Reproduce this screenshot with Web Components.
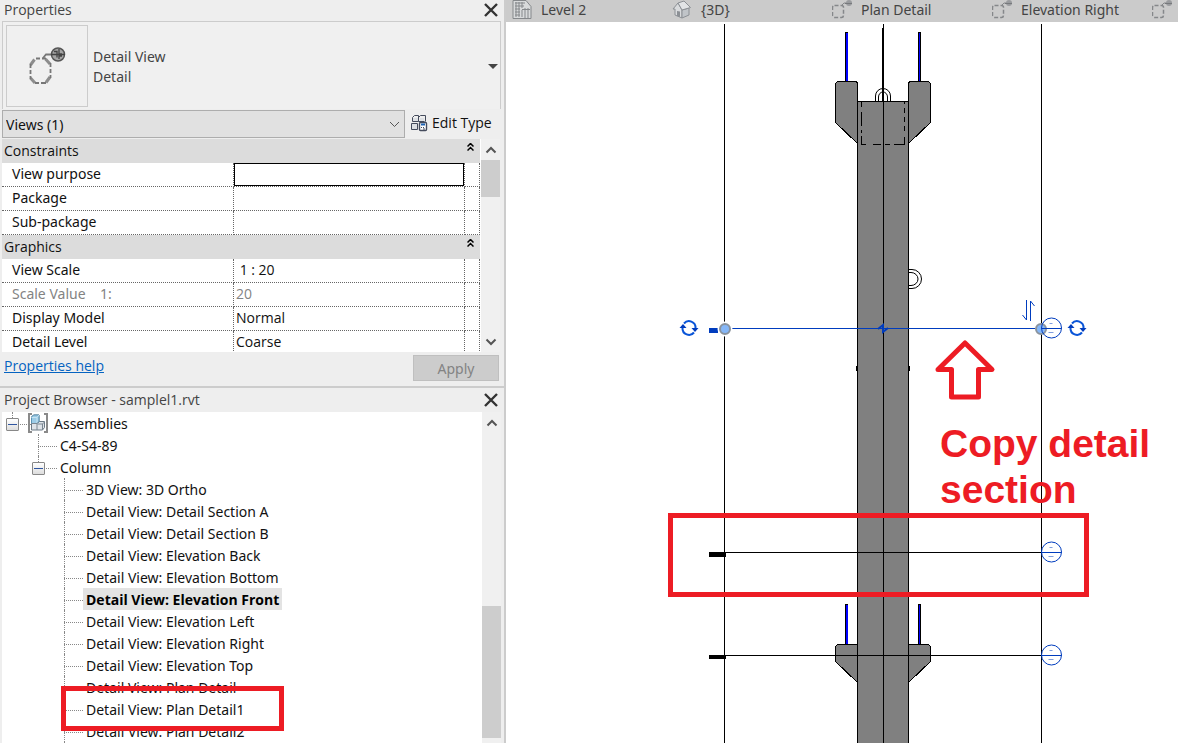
<!DOCTYPE html>
<html lang="en">
<head>
<meta charset="utf-8">
<title>Revit</title>
<style>
  body { margin: 0; font: 14px/20px "Open Sans", sans-serif; color: #111; }
</style>
</head>
<body>
<revit-app></revit-app>

<template id="t-app">
  <style>
    :host { display: grid; grid-template-columns: auto minmax(0, 1fr); height: 100vh; overflow: hidden; }
    .dock { display: grid; grid-template-rows: auto minmax(0, 1fr); width: 504px; background: #eee; border-right: 2px solid #ccc; min-height: 0; }
    .view { display: grid; grid-template-rows: 22px minmax(0, 1fr); min-width: 0; min-height: 0; }
  </style>
  <div class="dock">
    <properties-panel></properties-panel>
    <project-browser></project-browser>
  </div>
  <main class="view">
    <view-tabs>
      <view-tab icon="plan">Level 2</view-tab>
      <view-tab icon="house">{3D}</view-tab>
      <view-tab icon="detail">Plan Detail</view-tab>
      <view-tab icon="detail">Elevation Right</view-tab>
      <view-tab icon="detail"></view-tab>
    </view-tabs>
    <drawing-canvas></drawing-canvas>
  </main>
</template>

<template id="t-header">
  <style>
    :host { display: flex; justify-content: space-between; align-items: center; padding: 0 6px 0 4px; color: #444; }
    h2 { margin: 0; font: inherit; white-space: nowrap; }
    button { display: flex; padding: 0; border: 0; background: none; }
  </style>
  <h2><slot></slot></h2>
  <button aria-label="Close"><svg width="14" height="14" viewBox="0 0 14 14"><path d="M1 1l12 12M13 1L1 13" stroke="#333" stroke-width="2.400"/></svg></button>
</template>

<template id="t-scroll">
  <style>
    :host { display: flex; flex-direction: column; width: 19px; background: #f0f0f0; }
    button { display: flex; flex: none; align-items: center; justify-content: center; height: 21px; padding: 0; border: 0; background: none; }
    .before { flex: var(--before, 0) 0 0; }
    .thumb { flex: var(--thumb, 1) 0 0; background: #cdcdcd; }
    .after { flex: var(--after, 1) 0 0; }
    :host([no-end]) .end { display: none; }
  </style>
  <button aria-label="Scroll up"><svg width="12" height="8" viewBox="0 0 12 8"><path d="M1.500 6.500L6 2l4.500 4.500" fill="none" stroke="#555" stroke-width="2"/></svg></button>
  <div class="before"></div><div class="thumb"></div><div class="after"></div>
  <button class="end" aria-label="Scroll down"><svg width="12" height="8" viewBox="0 0 12 8"><path d="M1.500 1.500L6 6l4.500-4.500" fill="none" stroke="#555" stroke-width="2"/></svg></button>
</template>

<template id="t-properties">
  <style>
    :host { display: block; border-bottom: 2px solid #ccc; }
    panel-header { height: 19px; padding-bottom: 2px; }
    .type { display: flex; align-items: center; gap: 5px; margin: 0 3px 0 2px; height: 88px; padding: 0 2px 0 3px; box-sizing: border-box; border: 1px solid #ccc; border-bottom: 0; background: #f0f0f0; color: #444; }
    .thumb { display: flex; align-items: center; justify-content: center; box-sizing: border-box; width: 82px; height: 82px; border: 1px solid #ccc; }
    .name { flex: 1; padding-top: 2px; font-family: "Noto Sans", sans-serif; }
    button { font: inherit; }
    .drop { display: flex; padding: 2px 0 0; border: 0; background: none; }
    .filter { display: flex; gap: 6px; margin: 1px 0 1px 2px; height: 28px; }
    .pick { position: relative; width: 403px; }
    select { appearance: none; width: 100%; height: 28px; padding: 2px 3px 0; border: 1px solid #adadad; border-radius: 0; background: #e1e1e1; font: inherit; font-family: "Noto Sans", sans-serif; color: #111; }
    .pick svg { position: absolute; right: 5px; top: 11px; pointer-events: none; }
    .edit { display: flex; align-items: center; gap: 4px; padding: 0 0 2px; border: 0; background: none; color: #111; white-space: nowrap; }
    .grid { display: flex; gap: 1px; margin: 0 4px 0 2px; height: 213px; overflow: hidden; background: #fff; }
    property-grid { flex: 1; }
    scroll-bar { --thumb: 37; --after: 134; }
    .foot { display: flex; justify-content: space-between; align-items: flex-start; padding: 3px 5px 5px 4px; }
    a { color: #0563c1; line-height: 22px; }
    .apply { box-sizing: border-box; width: 86px; height: 26px; padding: 2px 0 0; border: 1px solid #bfbfbf; background: #ccc; color: #838383; font-family: "Noto Sans", sans-serif; }
  </style>
  <panel-header>Properties</panel-header>
  <div class="type">
    <div class="thumb"><svg width="40" height="42" viewBox="0 0 40 42" fill="none">
      <path d="M3.500 20l4-5.500M18.500 14l4.500 5M23 32l-4 5.500M8 38l-4.500-5" stroke="#8d8d8d" stroke-width="3"/>
      <path d="M9 13.500h4M15 13.500h4M8 38h4M14 38h5M3.500 19v4M3.500 25v4M3.500 31v3M23.500 18v4M23.500 24v4M23.500 30v3M16 13l3-3.500h5" stroke="#777" stroke-width="1.800"/>
      <circle cx="31" cy="9.500" r="6.500" fill="#a5a5a5" stroke="#555" stroke-width="1.500"/><path d="M24 9.500h14M27 6.500h3v6M32 4v5h3M32 14v-3h3" stroke="#444" stroke-width="1.300"/>
    </svg></div>
    <div class="name">Detail View<br>Detail</div>
    <button class="drop" aria-label="Change type"><svg width="10" height="5" viewBox="0 0 10 5"><path d="M0 0h10L5 5z" fill="#444"/></svg></button>
  </div>
  <div class="filter">
    <div class="pick"><select aria-label="Element filter"><option>Views (1)</option></select>
      <svg width="11" height="7" viewBox="0 0 11 7"><path d="M1 1l4.500 4.500L10 1" fill="none" stroke="#555"/></svg></div>
    <button class="edit"><svg width="17" height="17" viewBox="0 0 17 17" fill="none" stroke="#444b5c">
      <path d="M1.500 2.500l2-2h4v6h-6zM7.500 2.500l2-2h5v6M.5 8.500h6v6h-6zM7.500 6.500h6"/><path d="M2 3h5v3H2zM9 3h4v3H9zM1 9h5v5H1z" fill="#dde0e4" stroke="none"/>
      <rect x="8.500" y="7.500" width="7" height="8" rx="1" fill="#fff" stroke-width="1.400"/><path d="M10 9.500h4" stroke="#1c62b5" stroke-width="2"/><path d="M10 12.500h1M12 12.500h1M12 14h2"/>
    </svg>Edit Type</button>
  </div>
  <div class="grid"><property-grid></property-grid><scroll-bar></scroll-bar></div>
  <div class="foot"><a href="#help">Properties help</a><button class="apply">Apply</button></div>
</template>

<template id="t-grid">
  <style>
    :host { display: block; }
    table { width: 100%; table-layout: fixed; border-collapse: separate; border-spacing: 0; }
    .c1 { width: 232px; } .c3 { width: 15px; }
    th, td { box-sizing: border-box; height: 24px; padding: 0 2px 2px; border-bottom: 1px dotted #666; border-right: 1px dotted #666; text-align: left; font-weight: 400; line-height: 20px; white-space: pre; }
    tbody th { padding-left: 10px; font-family: "Noto Sans", sans-serif; }
    .group th { background: #dcdcdc; border: 0; padding: 0 6px 0 2px; font-family: inherit; }
    .group div { display: flex; justify-content: space-between; }
    .off { color: #838383; }
    input { display: block; box-sizing: border-box; width: 100%; height: 23px; padding: 0 2px; border: 1px solid #000; background: #fff; font: inherit; }
    tbody .field { padding: 0; }
    button { padding: 0; border: 0; background: none; height: 12px; display: flex; align-items: center; }
  </style>
  <table>
    <colgroup><col class="c1"><col><col class="c3"></colgroup>
    <tbody></tbody>
  </table>
</template>

<template id="t-browser">
  <style>
    :host { display: grid; grid-template-rows: 24px minmax(0, 1fr); min-height: 0; }
    .body { display: flex; margin: 0 3px 0 2px; min-height: 0; background: #fff; }
    .tree { flex: 1; padding-left: 10px; overflow: hidden; }
    scroll-bar { --before: 173; --thumb: 132; --after: 5; }
  </style>
  <panel-header>Project Browser - samplel1.rvt</panel-header>
  <div class="body">
    <div class="tree" role="tree">
      <tree-node label="Assemblies" last open icon>
        <tree-node label="C4-S4-89"></tree-node>
        <tree-node label="Column" last open>
          <tree-node label="3D View: 3D Ortho"></tree-node>
          <tree-node label="Detail View: Detail Section A"></tree-node>
          <tree-node label="Detail View: Detail Section B"></tree-node>
          <tree-node label="Detail View: Elevation Back"></tree-node>
          <tree-node label="Detail View: Elevation Bottom"></tree-node>
          <tree-node label="Detail View: Elevation Front" current></tree-node>
          <tree-node label="Detail View: Elevation Left"></tree-node>
          <tree-node label="Detail View: Elevation Right"></tree-node>
          <tree-node label="Detail View: Elevation Top"></tree-node>
          <tree-node label="Detail View: Plan Detail"></tree-node>
          <tree-node label="Detail View: Plan Detail1" marked></tree-node>
          <tree-node label="Detail View: Plan Detail2"></tree-node>
          <tree-node></tree-node>
        </tree-node>
      </tree-node>
    </div>
    <scroll-bar no-end></scroll-bar>
  </div>
</template>

<template id="t-node">
  <style>
    :host { display: block; position: relative; }
    :host::before { content: ""; position: absolute; left: 0; top: 0; bottom: 0; border-left: 1px dotted #888; }
    :host([last])::before { bottom: auto; height: 12px; }
    .row { display: flex; align-items: center; height: 22px; }
    .guide { width: 19px; margin-top: 2px; border-top: 1px dotted #888; }
    .label { box-sizing: border-box; height: 22px; padding: 1px 3px 0; font-family: "Noto Sans", sans-serif; line-height: 22px; white-space: nowrap; }
    .kids { padding-left: 26px; }
    button { position: relative; flex: none; width: 13px; height: 13px; margin: 2px -7px 0 -6px; padding: 0; border: 1px solid #888; border-radius: 1px; background: linear-gradient(#fff, #ddd); display: none; align-items: center; justify-content: center; }
    button i { width: 9px; height: 1px; background: #2f55a0; }
    :host([open]) button { display: flex; }
    .icon { display: none; flex: none; margin-left: -3px; }
    :host([icon]) .icon { display: block; }
    :host([icon]) .label { padding-left: 6px; }
    :host([current]) .label { background: #e3e3e3; font-family: "Open Sans", sans-serif; font-weight: 700; color: #000; }
    :host([marked])::after { content: ""; position: absolute; z-index: 1; left: -3px; top: -12px; width: 213px; height: 35px; border: 5px solid #ed1c24; }
  </style>
  <div class="row" role="treeitem">
    <button aria-label="Collapse"><i></i></button><span class="guide"></span>
    <svg class="icon" width="20" height="20" viewBox="0 0 20 20" fill="none"><path d="M4 1H1v18h3M16 1h3v18h-3" stroke="#8a8a8a" stroke-width="2"/><path d="M3.500 4l2-2H11v6.500h5.500v6l-2 2.500h-11z" fill="#dfe3e8" stroke="#6d7a86"/><path d="M3.500 4l2-2H11v7l-2 1.500H3.500z" fill="#9ccbe6" stroke="#5b93b4"/><path d="M3.500 4.500H9v6M9 4.500L11 2" stroke="#c6e4f3"/><path d="M3.500 10.500H9V17M9 10.500l2-2M9.500 11h5v6M14.500 11l2-2" stroke="#7b8792"/></svg>
    <span class="label"></span>
  </div>
  <div class="kids" role="group"><slot></slot></div>
</template>

<template id="t-tabs">
  <style>:host { display: flex; overflow: hidden; padding-left: 6px; background: #cbcbcb; }</style>
  <slot></slot>
</template>

<template id="t-tab">
  <style>
    :host { display: block; flex: 0 0 160px; }
    button { display: flex; align-items: center; gap: 9px; width: 100%; height: 20px; padding: 0; border: 0; background: none; font: inherit; font-family: "Noto Sans", sans-serif; color: #444; white-space: nowrap; }
    svg { flex: none; }
  </style>
  <button><svg width="20" height="20" viewBox="0 0 20 20" fill="none"></svg><span><slot></slot></span></button>
</template>

<template id="t-canvas">
  <style>
    :host { display: block; min-height: 0; background: #fff; overflow: hidden; }
    svg { display: block; width: 100%; height: 100%; }
    text { font: 700 39px/46px "Liberation Sans", sans-serif; fill: #ed1c24; }
  </style>
  <svg viewBox="506 22 672 721" preserveAspectRatio="xMinYMin slice" fill="none" role="img" aria-label="Column elevation">
    <defs>
      <g id="turn"><path d="M-5-4.500A6.500 6.500 0 0 1 6.500 0M5 4.500A6.500 6.500 0 0 1-6.500 0" stroke="#0a55d8" stroke-width="2"/><path d="M-9.500 0L-6-4-2.500 0zM9.500 0L6 4 2.500 0z" fill="#003cbe"/></g>
      <g id="head" stroke="#003cbe"><circle r="10"/><path d="M-10 .5H10"/><path d="M-2-4.500h3M-3 4.500h5" opacity=".5"/></g>
    </defs>
    <g shape-rendering="crispEdges">
      <path d="M724.500 24v719M1041.500 24v719" stroke="#000"/>
      <g fill="#808080" stroke="#000">
        <path d="M857.500 743V101.500h51V743"/>
        <path d="M857.500 143.500V83.500l-1-2h-19l-2 2v39zM908.500 143.500V83.500l1-2h19l2 2v39z"/>
        <path d="M857.500 682.500v-38h-20l-2 2v15zM908.500 682.500v-38h20l2 2v15z"/>
      </g>
      <path d="M845 32h3v49h-3zM918 32h3v49h-3zM845 604h3v40h-3zM918 604h3v40h-3z" fill="#000"/>
      <path d="M846 33h2v48h-2zM919 33h1v48h-1zM846 605h2v39h-2zM919 605h1v39h-1z" fill="#00f"/>
      <path d="M861.500 102v42.500h43V102" stroke="#000" stroke-dasharray="5 5 14 4 3 3 13 7 8 4 5 4 18 6 5 4 5 4 5 4 14"/>
      <path d="M882.500 28v73M883.500 24v719" stroke="#000"/>
      <path d="M709 552h17v5h-17zM709 655h17v4h-17zM856 366h2v5h-2zM908 366h2v5h-2z" fill="#000"/>
      <path d="M724 552.500h318M724 655.500h318" stroke="#000"/>
      <path d="M731 328.500h304" stroke="#003cbe"/>
      <path d="M709 328h9v5h-9z" fill="#003cbe"/>
    </g>
    <path d="M875.500 101v-5a7.500 7.500 0 0 1 15 0v5M878.500 101v-4a4.500 5 0 0 1 9 0v4M909 269.500h3a9.500 9.500 0 0 1 0 19h-3M909 272.500h2a7 6.500 0 0 1 0 13h-2" stroke="#000"/>
    <path d="M878 329l5-4v7l5-4" stroke="#003cbe" stroke-width="2"/>
    <path d="M1026.500 300v20M1022.500 315l4 5M1030.500 321v-20M1034.500 306l-4-5" stroke="#003cbe"/>
    <use href="#turn" x="689" y="328"/><use href="#turn" x="1077" y="328"/>
    <circle cx="725" cy="329" r="7.500" fill="#fff"/><circle cx="725" cy="329" r="5" fill="#86b7f7" stroke="#8a939d" stroke-width="2"/>
    <circle cx="1041" cy="329" r="5" fill="#86b7f7" stroke="#8a939d" stroke-width="2"/>
    <use href="#head" x="1051.500" y="328"/><use href="#head" x="1051.500" y="552"/><use href="#head" x="1051.500" y="655"/>
    <path d="M965 343l27 26.500h-13.500V397h-27v-27.500H938z" stroke="#ed1c24" stroke-width="5" stroke-linejoin="round"/>
    <rect x="670.500" y="515.500" width="416" height="79" stroke="#ed1c24" stroke-width="5"/>
    <text x="940" y="457">Copy detail</text>
    <text x="940" y="503">section</text>
  </svg>
</template>

<script>
  function define(name, templateId, setup) {
    customElements.define(name, class extends HTMLElement {
      connectedCallback() {
        if (this.shadowRoot) return;
        const root = this.attachShadow({ mode: 'open' });
        root.append(document.getElementById(templateId).content.cloneNode(true));
        if (setup) setup(this, root);
      }
    });
  }

  const detailIcon = '<path d="M2.500 5.500h7a2 2 0 0 1 2 2v8a2 2 0 0 1-2 2h-7a2 2 0 0 1-2-2v-8a2 2 0 0 1 2-2z" stroke="#85878a" stroke-width="1.500" stroke-dasharray="4 2"/><path d="M10 5l2-2h3" stroke="#85878a"/><circle cx="17" cy="3" r="3" fill="#9a9c9f"/><path d="M13 3.500h7" stroke="#77797c"/>';
  const icons = {
    detail: detailIcon,
    house: '<path d="M1 9l5-6 4 7v8l-7-3V9z" fill="#d9dbdd" stroke="#8c9095"/><path d="M10 10l7-2v7l-7 3z" fill="#c0c4c8" stroke="#8c9095"/><path d="M6 3l6-2 6.500 6.500L10 10z" fill="#e2e4e6" stroke="#8c9095"/><path d="M5 11l3 .5V17l-3-1z" fill="#8c9095"/>',
    plan: '<path d="M1 .5h13l5 6v12H1z" fill="#d8dadb" stroke="#85888b"/><path d="M3 3h10M3 6h9M3 9h5M3 12h5M3 15h5M4 2v15M7 2v15M10 2v6M10 10v7M13 8v10M16 8v10M10 9.500h8" stroke="#85888b"/>'
  };

  const rows = [
    { group: 'Constraints' },
    { name: 'View purpose', field: true },
    { name: 'Package', value: '' },
    { name: 'Sub-package', value: '' },
    { group: 'Graphics' },
    { name: 'View Scale', value: ' 1 : 20' },
    { name: 'Scale Value    1:', value: '20', off: true },
    { name: 'Display Model', value: 'Normal' },
    { name: 'Detail Level', value: 'Coarse' }
  ];
  const fold = '<svg width="7" height="8" viewBox="0 0 7 8" fill="none" stroke="#000" stroke-width="1.500"><path d="M.5 3.500l3-3 3 3M.5 7.500l3-3 3 3"/></svg>';

  define('panel-header', 't-header');
  define('scroll-bar', 't-scroll');
  define('property-grid', 't-grid', (host, root) => {
    root.querySelector('tbody').innerHTML = rows.map(r => r.group
      ? `<tr class="group"><th colspan="3"><div>${r.group}<button aria-label="Collapse ${r.group}">${fold}</button></div></th></tr>`
      : `<tr class="${r.off ? 'off' : ''}"><th scope="row">${r.field ? `<label for="purpose">${r.name}</label>` : r.name}</th>` +
        (r.field ? '<td class="field"><input id="purpose"></td>' : `<td>${r.value}</td>`) + '<td></td></tr>').join('');
  });
  define('properties-panel', 't-properties');
  define('tree-node', 't-node', (host, root) => {
    root.querySelector('.label').textContent = host.getAttribute('label') || '';
  });
  define('project-browser', 't-browser');
  define('view-tab', 't-tab', (host, root) => {
    root.querySelector('svg').innerHTML = icons[host.getAttribute('icon')];
  });
  define('view-tabs', 't-tabs');
  define('drawing-canvas', 't-canvas');
  define('revit-app', 't-app');
</script>
</body>
</html>
